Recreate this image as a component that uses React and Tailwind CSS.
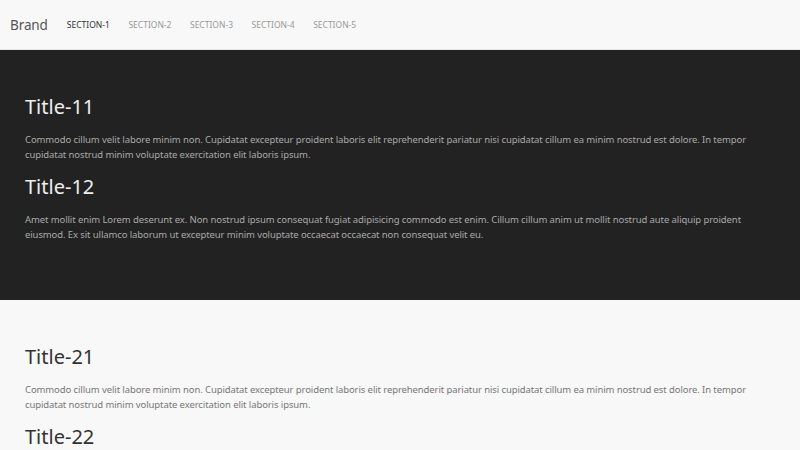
export default function App() {
  const font = { fontFamily: '"Noto Sans", "Open Sans", sans-serif' };
  const sections = [
    {
      dark: true,
      items: [
        {
          t: "Title-11",
          p: "Commodo cillum velit labore minim non. Cupidatat excepteur proident laboris elit reprehenderit pariatur nisi cupidatat cillum ea minim nostrud est dolore. In tempor cupidatat nostrud minim voluptate exercitation elit laboris ipsum.",
        },
        {
          t: "Title-12",
          p: "Amet mollit enim Lorem deserunt ex. Non nostrud ipsum consequat fugiat adipisicing commodo est enim. Cillum cillum anim ut mollit nostrud aute aliquip proident eiusmod. Ex sit ullamco laborum ut excepteur minim voluptate occaecat occaecat non consequat velit eu.",
        },
      ],
    },
    {
      dark: false,
      items: [
        {
          t: "Title-21",
          p: "Commodo cillum velit labore minim non. Cupidatat excepteur proident laboris elit reprehenderit pariatur nisi cupidatat cillum ea minim nostrud est dolore. In tempor cupidatat nostrud minim voluptate exercitation elit laboris ipsum.",
        },
        {
          t: "Title-22",
          p: "Amet mollit enim Lorem deserunt ex. Non nostrud ipsum consequat fugiat adipisicing commodo est enim. Cillum cillum anim ut mollit nostrud aute aliquip proident eiusmod. Ex sit ullamco laborum ut excepteur minim voluptate occaecat occaecat non consequat velit eu.",
        },
      ],
    },
  ];
  return (
    <div className="w-[800px] h-[450px] overflow-hidden bg-[#f8f8f8]" style={font}>
      <nav className="h-[50px] flex items-center pt-[2px] bg-[#f8f8f8] border-b border-[#e7e7e7]">
        <span className="pl-[10px] pr-[19px] text-[13.5px] text-[#555] tracking-[-0.1px] whitespace-nowrap">Brand</span>
        <ul className="flex items-center gap-[18.5px] text-[8.5px] uppercase">
          {["SECTION-1", "SECTION-2", "SECTION-3", "SECTION-4", "SECTION-5"].map((s, i) => (
            <li key={s} className={`whitespace-nowrap ${i === 0 ? "text-[#333]" : "text-[#999]"}`}>{s}</li>
          ))}
        </ul>
      </nav>
      {sections.map((sec, i) => (
        <section
          key={i}
          className={`h-[250px] px-[25px] pt-[44px] ${sec.dark ? "bg-[#222222]" : "bg-[#f8f8f8]"}`}
        >
          {sec.items.map((it) => (
            <div key={it.t} className="mb-[12px]">
              <h2 className={`text-[20px] leading-[26px] mb-[12px] ${sec.dark ? "text-[#eeeeee]" : "text-[#333333]"}`}>{it.t}</h2>
              <p className={`text-[9.5px] leading-[15px] tracking-[-0.1px] ${sec.dark ? "text-[#a9a9a9]" : "text-[#777777]"}`}>{it.p}</p>
            </div>
          ))}
        </section>
      ))}
    </div>
  );
}
